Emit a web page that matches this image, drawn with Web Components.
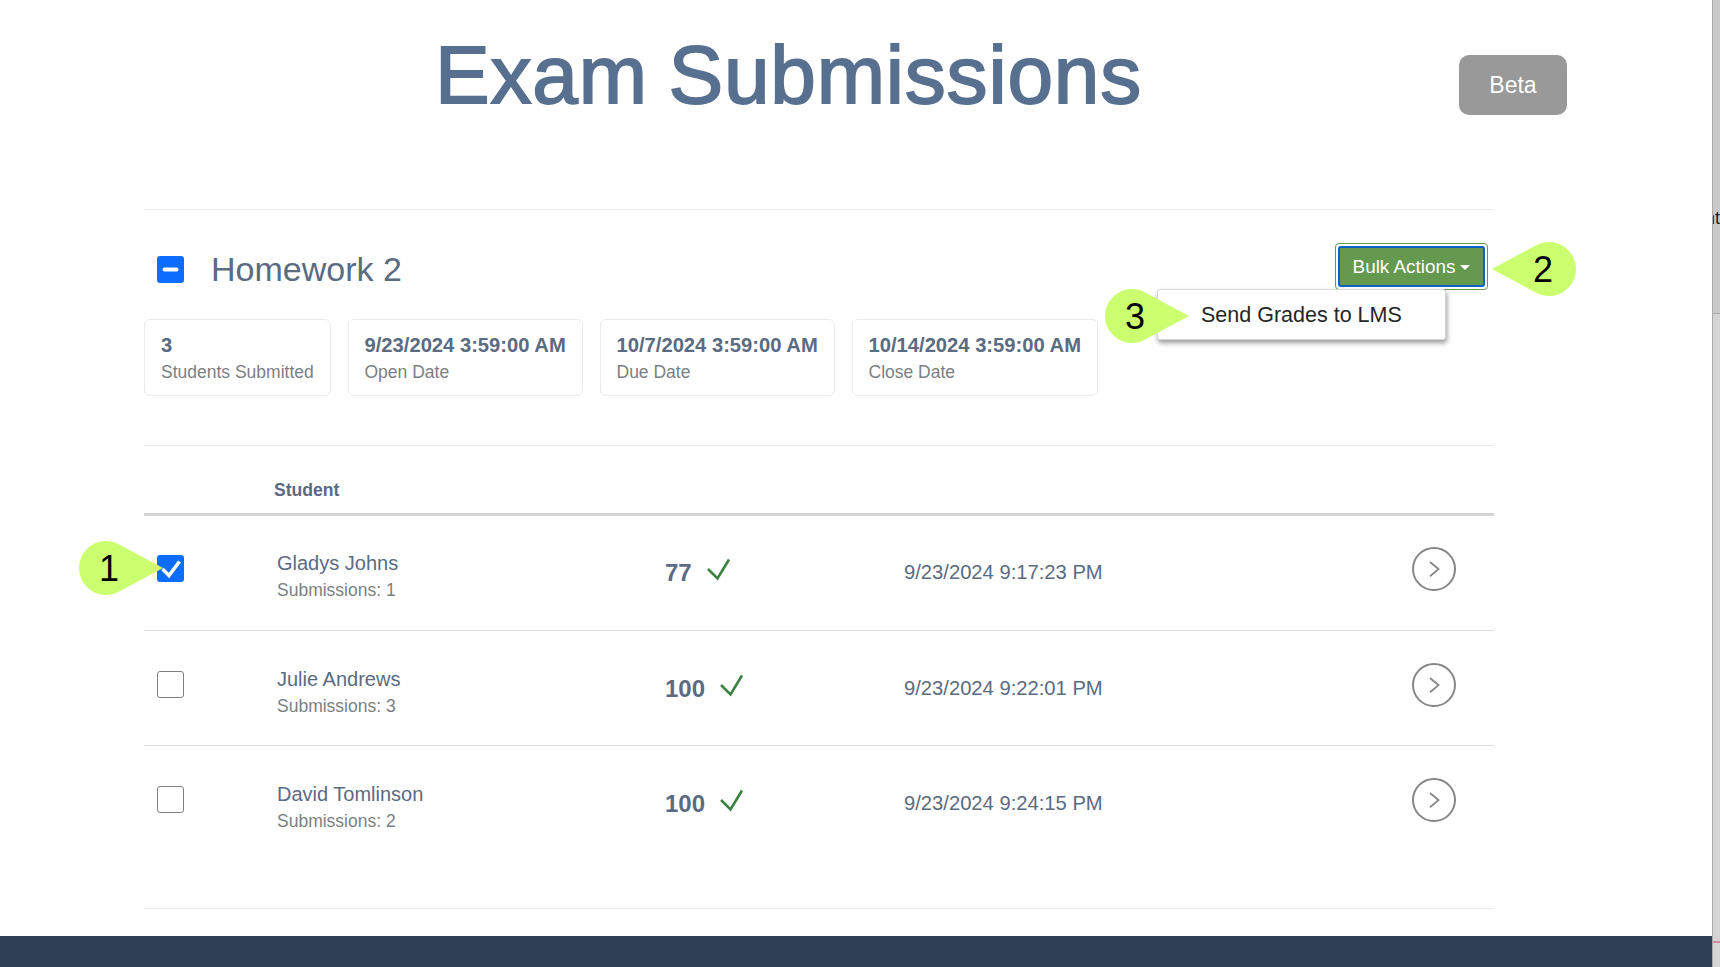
<!DOCTYPE html>
<html>
<head>
<meta charset="utf-8">
<title>Exam Submissions</title>
<style>
  html, body { margin: 0; height: 100%; background: #fff; overflow: hidden; }
  body { font-family: "Liberation Sans", Arial, sans-serif; }
</style>
</head>
<body>
<exam-page></exam-page>
<script>
const BLUE = '#0d6efd';

class ExamCheck extends HTMLElement {
  connectedCallback() {
    const state = this.getAttribute('state') || 'off';
    const root = this.attachShadow({ mode: 'open' });
    let mark = '';
    if (state === 'on') mark = '<svg width="27" height="27" viewBox="0 0 27 27"><path d="M5.5 14l6.5 6.5L22.5 6.5" fill="none" stroke="#fff" stroke-width="3.5"/></svg>';
    if (state === 'mixed') mark = '<svg width="27" height="27" viewBox="0 0 27 27"><path d="M7.5 13.5h12" fill="none" stroke="#fff" stroke-width="4" stroke-linecap="round"/></svg>';
    root.innerHTML = `<style>
      :host { display: block; width: 27px; height: 27px; }
      div { width: 27px; height: 27px; box-sizing: border-box; border-radius: 3px; border: 1px solid #808080; display: flex; }
      div.on, div.mixed { background: ${BLUE}; border: 0; }
    </style><div class="${state}">${mark}</div>`;
  }
}
customElements.define('exam-check', ExamCheck);

class StatCard extends HTMLElement {
  connectedCallback() {
    const root = this.attachShadow({ mode: 'open' });
    root.innerHTML = `<style>
      :host { display: block; box-sizing: border-box; height: 77px; padding: 13px 15.5px 0; border: 1px solid #e9ecef; border-radius: 6px; }
      b { display: block; font-size: 20.2px; line-height: 24px; color: #5a6b82; white-space: nowrap; }
      span { display: block; margin-top: 2px; font-size: 17.5px; line-height: 26px; color: #7b7f83; white-space: nowrap; }
    </style><b>${this.getAttribute('value')}</b><span>${this.getAttribute('label')}</span>`;
  }
}
customElements.define('stat-card', StatCard);

class CalloutPin extends HTMLElement {
  connectedCallback() {
    const flip = this.hasAttribute('flip');
    const root = this.attachShadow({ mode: 'open' });
    root.innerHTML = `<style>
      :host { position: absolute; display: block; width: 84px; height: 54px; }
      svg { position: absolute; inset: 0; }
      span { position: absolute; top: 1px; line-height: 54px; font-size: 36px; color: #000; text-align: center; }
    </style>
    <svg width="84" height="54" viewBox="0 0 84 54" style="transform: scaleX(${flip ? -1 : 1})"><path d="M84 27L39.8 3.2A27 27 0 1 0 39.8 50.8Z" fill="#cbff70"/></svg>
    <span style="${flip ? 'right:0;width:66px' : 'left:0;width:60px'}"><slot></slot></span>`;
  }
}
customElements.define('callout-pin', CalloutPin);

class SubmissionRow extends HTMLElement {
  connectedCallback() {
    const root = this.attachShadow({ mode: 'open' });
    const a = n => this.getAttribute(n);
    root.innerHTML = `<style>
      :host { display: block; height: 113px; padding-top: 1px; border-bottom: 1px solid #dcdcdc; box-sizing: content-box; }
      .row { display: grid; grid-template-columns: 133px 388px 239px 1fr 44px; height: 100%; position: relative; padding-right: 38px; align-items: start; }
      .check { padding: 39px 0 0 13px; }
      .name { padding-top: 35px; color: #5a6b82; font-size: 20px; line-height: 24px; }
      .subs { margin-top: 2px; color: #7b7f83; font-size: 17.5px; line-height: 26px; }
      .score { padding-top: 43px; display: flex; align-items: flex-start; gap: 13px; font-size: 24px; line-height: 28px; font-weight: 700; color: #5a6b82; }
      .score svg { margin-top: -3px; }
      .date { padding-top: 44px; font-size: 20.2px; line-height: 24px; color: #5a6b82; white-space: nowrap; }
      .go { padding-top: 31px; }
    </style>
    <div class="row">
      <div class="check"><exam-check state="${a('checked') !== null ? 'on' : 'off'}"></exam-check></div>
      <div class="name">${a('name')}<div class="subs">Submissions: ${a('subs')}</div></div>
      <div class="score">${a('score')}<svg width="26" height="26" viewBox="0 0 26 26"><path d="M3 13l9.5 9.5L24 3.5" fill="none" stroke="#3b8140" stroke-width="2.6"/></svg></div>
      <div class="date">${a('date')}</div>
      <div class="go"><svg width="44" height="44" viewBox="0 0 44 44"><circle cx="22" cy="22" r="21" fill="none" stroke="#868686" stroke-width="2"/><path d="M18 15l8.5 7.1-8.5 7.2" fill="none" stroke="#868686" stroke-width="1.8"/></svg></div>
    </div>`;
  }
}
customElements.define('submission-row', SubmissionRow);

class ExamPage extends HTMLElement {
  connectedCallback() {
    const root = this.attachShadow({ mode: 'open' });
    root.innerHTML = `<style>
      :host { display: flex; flex-direction: column; position: relative; width: 1720px; height: 967px; overflow: hidden; color: #5a6b82; font-family: "Liberation Sans", Arial, sans-serif; }
      .page { width: 1712px; height: 100%; display: flex; flex-direction: column; min-height: 0; }
      .head { height: 210px; box-sizing: border-box; display: flex; position: relative; margin: 0 218px 0 144px; border-bottom: 1px solid #e9e9e9; }
      h1 { margin: 29px 0 0 291px; font-size: 82px; line-height: 92px; letter-spacing: .8px; word-spacing: -3px; font-weight: 400; color: #58708f; -webkit-text-stroke: 1.8px #58708f; white-space: nowrap; }
      .beta { position: absolute; left: 1315px; top: 55px; width: 108px; height: 60px; background: #999; border-radius: 10px; color: #fff; font-size: 23px; display: flex; align-items: center; justify-content: center; }
      .main { margin: 0 218px 0 144px; }
      .hw { display: flex; align-items: center; height: 109px; padding: 10px 6px 0 13px; box-sizing: border-box; }
      .hw h2 { margin: 0 0 0 27px; font-size: 34px; font-weight: 400; color: #5a6b82; }
      .bulk { margin-left: auto; margin-bottom: 7px; box-sizing: border-box; height: 47px; padding: 2px; border: 1px solid #64994f; border-radius: 4px; }
      .bulk div { box-sizing: border-box; height: 41px; width: 147px; padding-top: 1px; background: #64994f; border: 2px solid #0a62c9; border-radius: 3px; color: #fff; font-size: 18.9px; display: flex; align-items: center; justify-content: center; gap: 5px; }
      .bulk i { width: 0; height: 0; border: 5px solid transparent; border-top-color: #fff; border-bottom: 0; margin-top: 2px; }
      .menu { position: absolute; left: 1157px; top: 289px; width: 289px; height: 51px; box-sizing: border-box; background: #fff; border: 1px solid #d6d6d6; border-radius: 3px; box-shadow: 1px 3px 5px rgba(0,0,0,.4); padding-left: 43px; font-size: 21.5px; line-height: 50px; color: #262626; }
      .stats { display: flex; gap: 17px; padding-bottom: 49px; border-bottom: 1px solid #e9e9e9; }
      .thead { height: 70px; box-sizing: border-box; border-bottom: 3px solid #d4d4d4; padding: 32px 0 0 130px; font-size: 17.6px; line-height: 24px; font-weight: 700; color: #5a6b82; }
      .rest { height: 47px; border-bottom: 1px solid #e9e9e9; }
      footer { height: 31px; margin-top: auto; background: #2c3f55; }
      .scroll { position: absolute; right: 0; top: 0; bottom: 0; width: 8px; background: #d4d4d4; border-left: 1px solid #aaa; box-sizing: border-box; overflow: hidden; }
      .scroll b { position: absolute; left: 0; right: 0; top: 0; height: 313px; background: #c9c9c9; border-bottom: 1px solid #aaa; }
      .scroll span { position: absolute; left: -8px; top: 207px; font-size: 18px; line-height: 22px; color: #222; white-space: nowrap; }
      .scroll i { position: absolute; left: 0; right: 0; top: 941px; height: 2px; background: #d88aa8; }
    </style>
    <div class="page">
      <div class="head"><h1>Exam Submissions</h1><div class="beta">Beta</div></div>
      <div class="main">
        <div class="hw">
          <exam-check state="mixed"></exam-check>
          <h2>Homework 2</h2>
          <div class="bulk"><div>Bulk Actions <i></i></div></div>
        </div>
        <div class="stats">
          <stat-card value="3" label="Students Submitted" style="width:187px;padding-left:16px"></stat-card>
          <stat-card value="9/23/2024 3:59:00 AM" label="Open Date" style="width:235px"></stat-card>
          <stat-card value="10/7/2024 3:59:00 AM" label="Due Date" style="width:235px"></stat-card>
          <stat-card value="10/14/2024 3:59:00 AM" label="Close Date" style="width:246px"></stat-card>
        </div>
        <div class="thead">Student</div>
        <submission-row checked name="Gladys Johns" subs="1" score="77" date="9/23/2024 9:17:23 PM" style="height:114px;padding-top:0"></submission-row>
        <submission-row name="Julie Andrews" subs="3" score="100" date="9/23/2024 9:22:01 PM"></submission-row>
        <submission-row name="David Tomlinson" subs="2" score="100" date="9/23/2024 9:24:15 PM" style="height:114px;border-bottom:0"></submission-row>
        <div class="rest"></div>
      </div>
      <footer></footer>
    </div>
    <div class="menu">Send Grades to LMS</div>
    <callout-pin style="left:79px;top:541px">1</callout-pin>
    <callout-pin flip style="left:1492px;top:242px">2</callout-pin>
    <callout-pin style="left:1105px;top:289px">3</callout-pin>
    <div class="scroll"><b></b><span>nt</span><i></i></div>`;
  }
}
customElements.define('exam-page', ExamPage);
</script>
</body>
</html>
